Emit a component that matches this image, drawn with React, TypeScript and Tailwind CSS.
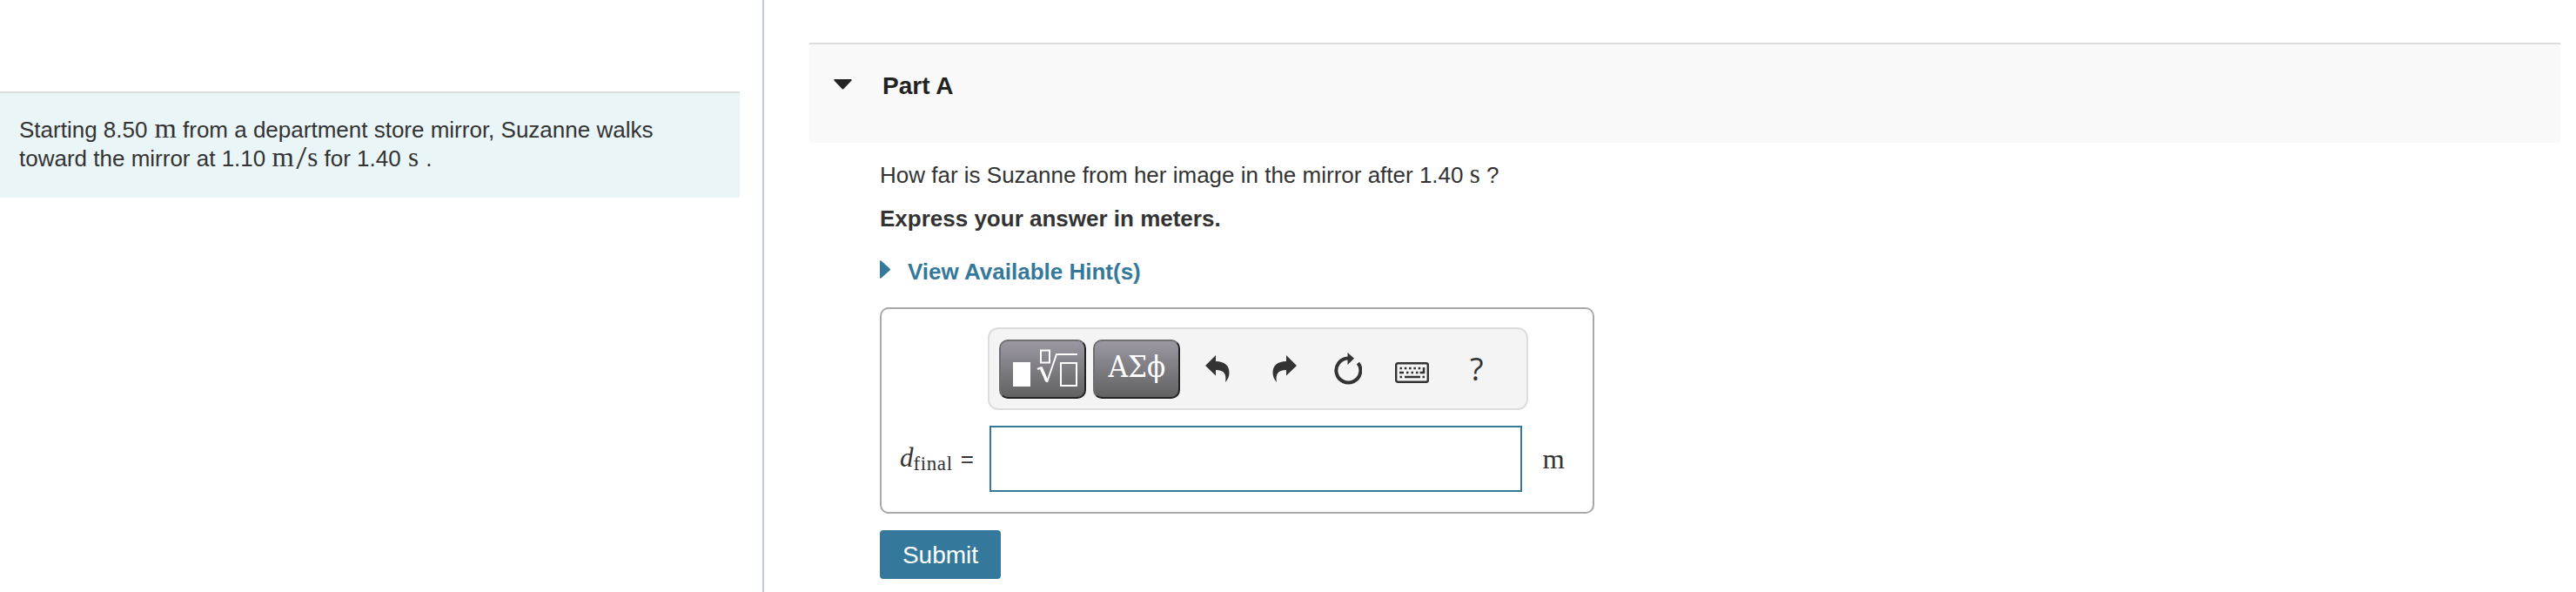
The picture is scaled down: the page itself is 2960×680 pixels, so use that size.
import type { ReactNode } from "react"

function MathText({ children, className = "" }: { children: ReactNode; className?: string }) {
  return (
    <span className={`inline-block font-['Liberation_Serif',serif] leading-none ${className}`}>
      {children}
    </span>
  )
}

function TemplateIcon() {
  return (
    <svg width="80" height="46" viewBox="0 0 80 46" fill="none" stroke="#fff">
      <rect x="6" y="15" width="20" height="28" fill="#fff" stroke="none" />
      <rect x="38" y="1.5" width="10" height="14" strokeWidth="2" />
      <path d="M34 23l5-2" strokeWidth="2" />
      <path d="M38 21l7 16" strokeWidth="3.500" />
      <path d="M45 38L56 6H80" strokeWidth="2" />
      <rect x="61" y="16" width="18" height="26" strokeWidth="2" />
    </svg>
  )
}

function UndoIcon({ className = "" }: { className?: string }) {
  return (
    <svg width="28" height="31" viewBox="0 0 28 31" fill="#333" className={className}>
      <path d="M0 12L12 0v7c10 0 15.500 5 15.500 13 0 4-1.500 8-4.500 11C24.500 22 22 17 12 17v6.500z" />
    </svg>
  )
}

function ResetIcon() {
  return (
    <svg width="33" height="37" viewBox="0 0 33 37">
      <path d="M17 6.500A14 14 0 1 0 28.500 12" fill="none" stroke="#333" strokeWidth="4" />
      <path d="M16.500 0l7.500 6.800-7.500 7.200z" fill="#333" />
    </svg>
  )
}

function KeyboardIcon() {
  return (
    <svg width="39" height="24" viewBox="0 0 39 24" fill="none" stroke="#333">
      <rect x="1.200" y="1.200" width="36.600" height="21.600" rx="2" strokeWidth="2.400" />
      <path d="M5.500 7h24" strokeWidth="2.500" strokeDasharray="2.500 2.800" />
      <path d="M5 12h5M13 12h2.500M18.500 12H21M24 12h2.500M28.500 12H34M33 6v7" strokeWidth="2.500" />
      <path d="M5.500 17H8M11 17h18M31.500 17H34" strokeWidth="2.500" />
    </svg>
  )
}

const paletteButton =
  "flex h-[68px] w-[100px] items-center rounded-[10px] border-2 border-t-[#6f6f6f] border-l-[#6f6f6f] border-r-[#222] border-b-[#222] bg-gradient-to-b from-[#9b98a3] to-[#626262] text-white"

function Toolbar() {
  return (
    <div className="ml-[122px] flex h-[95px] w-[621px] items-center rounded-xl border-2 border-[#ddd] bg-[#f4f4f4] pl-[11px]">
      <button className={`${paletteButton} pl-2`} aria-label="Templates">
        <TemplateIcon />
      </button>
      <button
        className={`${paletteButton} ml-2 justify-center font-['DejaVu_Serif_Condensed','DejaVu_Serif',serif] text-[33px] leading-none`}
        aria-label="Symbols"
      >
        <span className="-mt-1 inline-block scale-x-[1.05]">ΑΣϕ</span>
      </button>
      <UndoIcon className="ml-[29px]" />
      <UndoIcon className="ml-[49px] -scale-x-100" />
      <span className="ml-[42px]">
        <ResetIcon />
      </span>
      <span className="ml-[38px] pt-2">
        <KeyboardIcon />
      </span>
      <span className="ml-[47px] font-['Open_Sans',sans-serif] text-[36px] leading-none">?</span>
    </div>
  )
}

export default function App() {
  return (
    <div className="flex h-[680px] w-[2960px] overflow-hidden bg-white font-['Liberation_Sans',Arial,sans-serif] text-[26px] leading-[33px] text-[#333]">
      {/* Problem statement */}
      <aside className="w-[878px] shrink-0 border-r-2 border-[#bfc9db] pt-[105px]">
        <div className="h-[122px] w-[850px] border-t-2 border-[#ddd] bg-[#eaf5f8] pt-[25px] pl-[22px] whitespace-nowrap">
          <p className="h-[33px]">
            Starting 8.50 <MathText className="mx-px scale-x-105 text-[31px]">m</MathText> from a department store
            mirror, Suzanne walks
          </p>
          <p className="h-[33px]">
            toward the mirror at 1.10 <MathText className="mx-px scale-x-105 text-[31px]">m</MathText>
            <MathText className="mx-[3px] scale-x-140 scale-y-125 text-[31px]">/</MathText>
            <MathText className="text-[31px]">s</MathText> for 1.40{" "}
            <MathText className="mx-px text-[31px]">s</MathText> .
          </p>
        </div>
      </aside>

      <main className="ml-[52px] w-[2012px] pt-[49px]">
        <header className="flex h-[115px] items-start border-t-2 border-[#ddd] bg-[#f9f9f9] pl-7">
          <svg width="21" height="12" viewBox="0 0 21 12" className="mt-10" fill="#222">
            <path d="M1 0h19q1 0 .500 1.500L11.500 11q-1 1-2 0L.500 1.500Q0 0 1 0z" />
          </svg>
          <h1 className="ml-[35px] pt-[31px] text-[28px] leading-[33px] font-bold text-[#222]">Part A</h1>
        </header>

        <section className="pl-[81px] whitespace-nowrap">
          <p className="mt-5 h-[33px]">
            How far is Suzanne from her image in the mirror after 1.40 <MathText className="text-[31px]">s</MathText> ?
          </p>
          <p className="mt-[18px] h-[33px] font-bold">Express your answer in meters.</p>
          <div className="mt-[27px] flex h-[33px] items-center font-bold text-[#34799b]">
            <svg width="12" height="21" viewBox="0 0 12 21" fill="#34799b" className="-mt-1">
              <path d="M0 1Q0 0 1.500.500L11.500 9.500q1 1 0 2L1.500 20.500Q0 21 0 20z" />
            </svg>
            <span className="ml-5 pt-0.5">View Available Hint(s)</span>
          </div>

          <div className="mt-[25px] h-[237px] w-[821px] rounded-[10px] border-2 border-[#a9a9a9] pt-[21px]">
            <Toolbar />
            <div className="mt-[18px] flex h-[76px] items-center">
              <div className="flex h-[34px] w-[124px] items-baseline pl-[21px]">
                <MathText className="text-[31px] italic">d</MathText>
                <MathText className="translate-y-1 text-[23px] tracking-[0.6px]">final</MathText>
                <span className="ml-[9px]">=</span>
              </div>
              <input className="h-[76px] w-[612px] border-2 border-[#34799b] bg-white" aria-label="Answer" />
              <MathText className="ml-6 scale-x-105 text-[31px]">m</MathText>
            </div>
          </div>

          <button className="mt-[19px] h-14 w-[139px] rounded bg-[#34799b] text-[28px] text-white">Submit</button>
        </section>
      </main>
    </div>
  )
}
